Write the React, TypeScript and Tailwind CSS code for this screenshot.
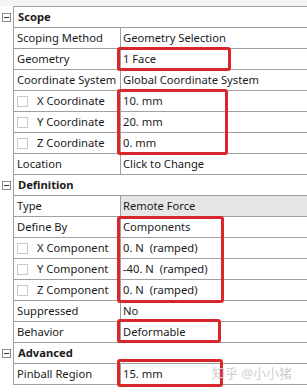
const FONT = { fontFamily: '"Noto Sans", "Noto Sans CJK SC", sans-serif' };

type Field = { label: string; value: string; check?: boolean; grey?: boolean };
type Section = { title: string; fields: Field[] };

const SECTIONS: Section[] = [
  {
    title: 'Scope',
    fields: [
      { label: 'Scoping Method', value: 'Geometry Selection' },
      { label: 'Geometry', value: '1 Face' },
      { label: 'Coordinate System', value: 'Global Coordinate System' },
      { label: 'X Coordinate', value: '10. mm', check: true },
      { label: 'Y Coordinate', value: '20. mm', check: true },
      { label: 'Z Coordinate', value: '0. mm', check: true },
      { label: 'Location', value: 'Click to Change' },
    ],
  },
  {
    title: 'Definition',
    fields: [
      { label: 'Type', value: 'Remote Force', grey: true },
      { label: 'Define By', value: 'Components' },
      { label: 'X Component', value: '0. N  (ramped)', check: true },
      { label: 'Y Component', value: '-40. N  (ramped)', check: true },
      { label: 'Z Component', value: '0. N  (ramped)', check: true },
      { label: 'Suppressed', value: 'No' },
      { label: 'Behavior', value: 'Deformable' },
    ],
  },
  {
    title: 'Advanced',
    fields: [{ label: 'Pinball Region', value: '15. mm' }],
  },
];

// red highlight frames drawn over the grid
const FRAMES = [
  { left: 117, top: 47, width: 114, height: 24 },
  { left: 117, top: 89, width: 111, height: 66 },
  { left: 117, top: 216, width: 107, height: 87 },
  { left: 117, top: 319, width: 104, height: 24 },
  { left: 117, top: 359, width: 106, height: 28 },
];

function Minus() {
  return (
    <div className="w-[9px] h-[9px] border border-[#8c8c8c] bg-white flex items-center justify-center">
      <div className="w-[5px] h-px bg-[#333]" />
    </div>
  );
}

export default function App() {
  return (
    <div className="relative w-[307px] h-[392px] bg-white overflow-hidden text-[11.2px] text-[#1a1a1a]" style={FONT}>
      <div className="h-[6px] bg-[#f4f4f4]" />
      <div className="h-px bg-[#a0a0a0] ml-[13px]" />
      {SECTIONS.map(sec => (
        <div key={sec.title}>
          <div className="flex h-[21px]">
            <div className="w-[13px] flex items-center pl-[2px]">
              <Minus />
            </div>
            <div className="flex-1 border-l border-b border-[#a0a0a0] flex items-center pl-[4px] font-bold">{sec.title}</div>
          </div>
          {sec.fields.map(f => (
            <div key={f.label} className="flex h-[21px]">
              <div className="w-[13px]" />
              <div className="flex-1 flex border-l border-b border-[#a0a0a0]">
                <div className="w-[107px] border-r border-[#a0a0a0] flex items-center pl-[3px] whitespace-nowrap">
                  {f.check && <div className="w-[11px] h-[11px] border border-[#c8c8c8] bg-white mr-[9px]" />}
                  {f.label}
                </div>
                <div className={`flex-1 flex items-center pl-[2px] whitespace-pre ${f.grey ? 'bg-[#e6e6e6]' : ''}`}>{f.value}</div>
              </div>
            </div>
          ))}
        </div>
      ))}

      {FRAMES.map((r, i) => (
        <div
          key={i}
          className="absolute border-[3px] border-[#d8262a] rounded-[3px]"
          style={{ left: r.left, top: r.top, width: r.width, height: r.height }}
        />
      ))}

      <div className="absolute left-[212px] top-[364px] text-[13px] text-[#cfcfcf]" style={FONT}>知乎 @小小猪</div>
    </div>
  );
}
